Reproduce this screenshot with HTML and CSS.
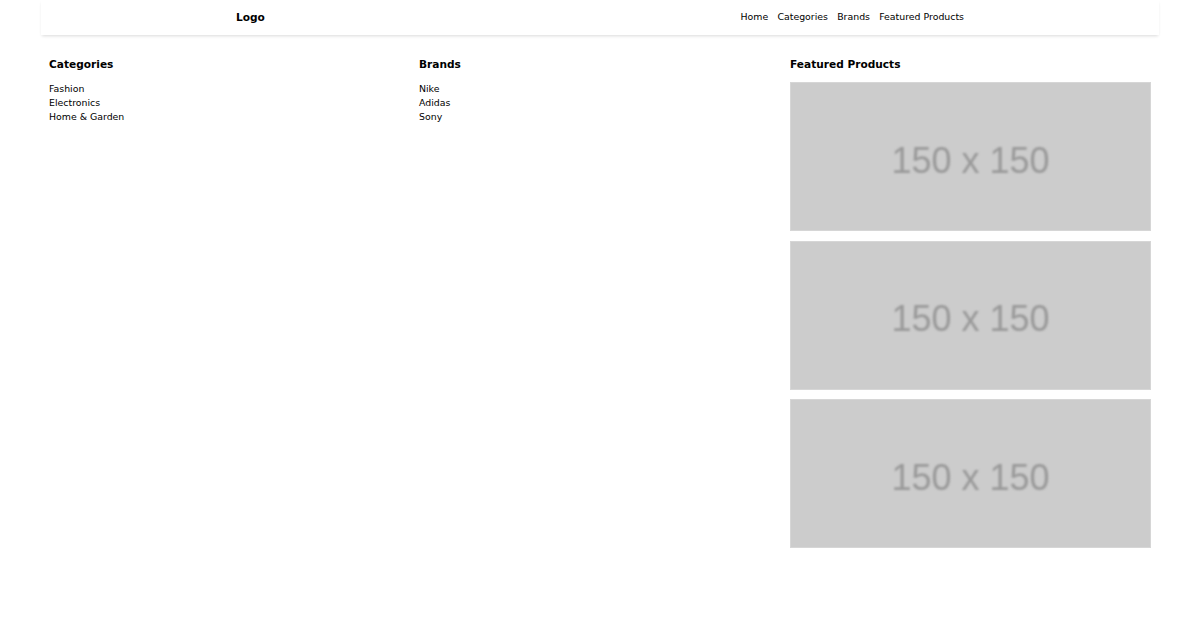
FILE: index.html
```html
<!DOCTYPE html>
<html>
<head>
<meta charset="utf-8">
<link rel="stylesheet" href="styles.css">
</head>
<body>
<div class="page">
  <header class="site-header">
    <div class="logo">Logo</div>
    <nav class="nav">
      <a href="#">Home</a>
      <a href="#">Categories</a>
      <a href="#">Brands</a>
      <a href="#">Featured Products</a>
    </nav>
  </header>
  <main class="columns">
    <section class="col">
      <h2 class="col-title">Categories</h2>
      <ul class="list">
        <li>Fashion</li>
        <li>Electronics</li>
        <li>Home &amp; Garden</li>
      </ul>
    </section>
    <section class="col">
      <h2 class="col-title">Brands</h2>
      <ul class="list">
        <li>Nike</li>
        <li>Adidas</li>
        <li>Sony</li>
      </ul>
    </section>
    <section class="col col-featured">
      <h2 class="col-title">Featured Products</h2>
      <div class="products">
        <div class="ph"><span>150 x 150</span></div>
        <div class="ph"><span>150 x 150</span></div>
        <div class="ph"><span>150 x 150</span></div>
      </div>
    </section>
  </main>
</div>
</body>
</html>
```
FILE: styles.css
```css
html, body {
  margin: 0;
  padding: 0;
  background: #fff;
}
body {
  font-family: "DejaVu Sans", sans-serif;
  color: #000;
}
.page {
  padding: 0 41px;
}
.site-header {
  height: 35px;
  box-sizing: border-box;
  display: flex;
  align-items: center;
  justify-content: space-between;
  padding: 0 195px 2px;
  box-shadow: 0 2px 3px -1px rgba(0, 0, 0, 0.15);
}
.logo {
  font-weight: bold;
  font-size: 10.6px;
}
.nav {
  display: flex;
  gap: 9.2px;
  font-size: 9.4px;
}
.nav a {
  color: #000;
  text-decoration: none;
}
.columns {
  display: grid;
  grid-template-columns: 370px 371px 1fr;
  padding-top: 23px;
}
.col {
  padding: 0 8px;
}
.col-title {
  margin: 0;
  font-size: 10.6px;
  font-weight: bold;
  line-height: 12px;
}
.list {
  list-style: none;
  margin: 12px 0 0;
  padding: 0;
  font-size: 9.4px;
  line-height: 14px;
}
.products {
  margin-top: 12px;
  display: flex;
  flex-direction: column;
  gap: 9.5px;
}
.ph {
  height: 149px;
  background: #ccc;
  box-shadow: inset 0 0 0 1px #d6d6d6;
  display: flex;
  align-items: center;
  justify-content: center;
  padding-top: 8px;
  box-sizing: border-box;
}
.ph span {
  font-family: "Liberation Sans", Arial, sans-serif;
  font-size: 36px;
  color: #999;
  filter: blur(0.8px);
}
```
